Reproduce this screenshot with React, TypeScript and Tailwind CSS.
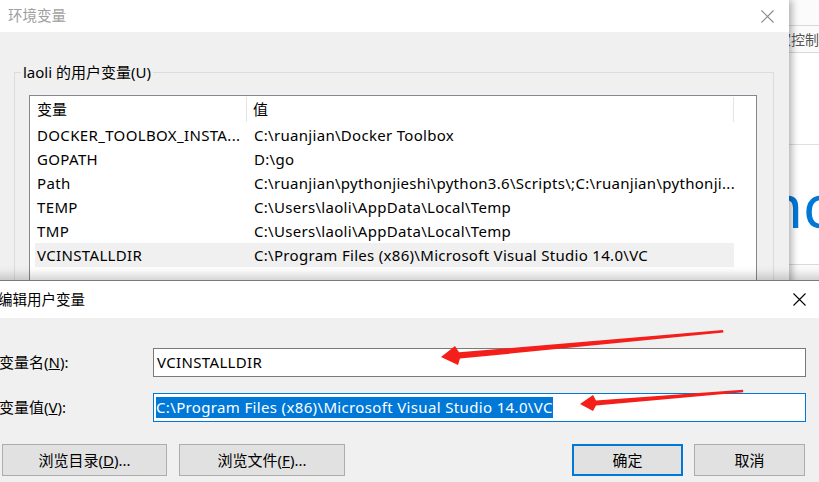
import React from "react";

const rows = [
  { name: "DOCKER_TOOLBOX_INSTA...", value: "C:\\ruanjian\\Docker Toolbox" },
  { name: "GOPATH", value: "D:\\go" },
  { name: "Path", value: "C:\\ruanjian\\pythonjieshi\\python3.6\\Scripts\\;C:\\ruanjian\\pythonji..." },
  { name: "TEMP", value: "C:\\Users\\laoli\\AppData\\Local\\Temp" },
  { name: "TMP", value: "C:\\Users\\laoli\\AppData\\Local\\Temp" },
  { name: "VCINSTALLDIR", value: "C:\\Program Files (x86)\\Microsoft Visual Studio 14.0\\VC", selected: true },
];

function CloseIcon({ color }: { color: string }) {
  return (
    <svg width="13" height="13" viewBox="0 0 13 13">
      <path d="M0.5 0.5 L12.5 12.5 M12.5 0.5 L0.5 12.5" stroke={color} strokeWidth="1.1" fill="none" />
    </svg>
  );
}

export default function App() {
  return (
    <div className="relative w-[819px] h-[482px] overflow-hidden bg-white text-[15px] text-black font-['Noto_Sans','Noto_Sans_CJK_SC',sans-serif]">

      {/* 后面的窗口 */}
      <div className="absolute left-[760px] top-0 w-[80px] h-full bg-[#fbfbfb] flex flex-col">
        <div className="h-[26px] border-b border-[#d9d9d9]" />
        <div className="h-[27px] border-b border-[#d9d9d9] pl-[17px] flex items-center text-[14px] text-[#555] whitespace-nowrap">
          家控制
        </div>
        <div className="h-[92px] border-b border-[#e0e0e0] bg-white" />
        <div className="h-[120px] border-b border-[#d9d9d9] bg-white pl-[6px] flex items-center text-[60px] leading-none text-[#0078d7] whitespace-nowrap">
          nc
        </div>
      </div>

      {/* 环境变量 */}
      <div className="absolute left-0 top-0 w-[789px] h-[300px] bg-[#f0f0f0] flex flex-col shadow-[3px_0_7px_rgba(0,0,0,0.3)]">
        <div className="h-[32px] shrink-0 bg-white flex items-center justify-between pl-[8px] pr-[15px]">
          <span className="text-[#a0a0a0] text-[14.5px]">环境变量</span>
          <CloseIcon color="#8a8a8a" />
        </div>

        <fieldset className="mt-[30px] ml-[14px] w-[760px] border border-[#dcdcdc] flex-1">
          <legend className="ml-[6px] px-[2px] leading-[20px]">laoli 的用户变量(U)</legend>

          <div className="mt-[13px] ml-[14px] w-[728px] h-[200px] bg-white border border-[#828790] flex flex-col">
            <div className="h-[27px] flex">
              <div className="w-[217px] pl-[7px] border-r border-[#e5e5e5] my-[1px] flex items-center">变量</div>
              <div className="w-[487px] pl-[6px] border-r border-[#e5e5e5] my-[1px] flex items-center">值</div>
            </div>
            {rows.map((r) => (
              <div
                key={r.name}
                className={[
                  "ml-[5px] w-[699px] h-[24px] flex items-center whitespace-nowrap tracking-[0.35px]",
                  r.selected ? "bg-[#f0f0f0]" : "",
                ].join(" ")}
              >
                <div className="w-[212px] shrink-0 pl-[2px] overflow-hidden">{r.name}</div>
                <div className="pl-[7px] tracking-[0.3px]">{r.value}</div>
              </div>
            ))}
          </div>
        </fieldset>
      </div>

      {/* 编辑用户变量 */}
      <div className="absolute left-[-12px] top-[280px] w-[845px] h-[210px] bg-[#f0f0f0] border-t border-[#7a7a7a] shadow-[0_-5px_9px_rgba(0,0,0,0.18)] flex flex-col">
        <div className="h-[37px] shrink-0 bg-white flex items-center justify-between pl-[10px] pr-[27px]">
          <span className="text-[14.5px]">编辑用户变量</span>
          <CloseIcon color="#000" />
        </div>

        <div className="pt-[30px] pl-[11px] pr-[27px] flex flex-col gap-[16px]">
          <div className="flex items-center">
            <label className="w-[154px] shrink-0">变量名(<span className="underline">N</span>):</label>
            <div className="flex-1 h-[29px] bg-white border border-[#7a7a7a] pl-[3px] flex items-center tracking-[0.35px]">
              VCINSTALLDIR
            </div>
          </div>
          <div className="flex items-center">
            <label className="w-[154px] shrink-0">变量值(<span className="underline">V</span>):</label>
            <div className="flex-1 h-[29px] bg-white border border-[#0078d7] pl-[2px] flex items-center tracking-[0.35px]">
              <span className="bg-[#0078d7] text-white leading-[21px]">C:\Program Files (x86)\Microsoft Visual Studio 14.0\VC</span>
            </div>
          </div>
        </div>

        <div className="mt-[22px] pl-[14px] pr-[28px] flex justify-between">
          <div className="flex gap-[12px]">
            <button className="w-[165px] h-[32px] bg-[#e1e1e1] border border-[#adadad]">
              浏览目录(<span className="underline">D</span>)...
            </button>
            <button className="w-[166px] h-[32px] bg-[#e1e1e1] border border-[#adadad]">
              浏览文件(<span className="underline">F</span>)...
            </button>
          </div>
          <div className="flex gap-[11px]">
            <button className="w-[111px] h-[32px] bg-[#e1e1e1] border-2 border-[#0078d7]">确定</button>
            <button className="w-[111px] h-[32px] bg-[#e1e1e1] border border-[#adadad]">取消</button>
          </div>
        </div>
      </div>

      {/* 红色箭头 */}
      <svg className="absolute inset-0 pointer-events-none" width="819" height="482" viewBox="0 0 819 482">
        <polygon
          points="441,357 455,346 459,352.3 723,330 723.5,332.5 460,358.6 458,365"
          fill="#f41f1a"
        />
        <polygon
          points="580,404 593,395 596,400.4 743,389.8 743.3,392.2 596,405.4 593,411"
          fill="#f41f1a"
        />
      </svg>
    </div>
  );
}
